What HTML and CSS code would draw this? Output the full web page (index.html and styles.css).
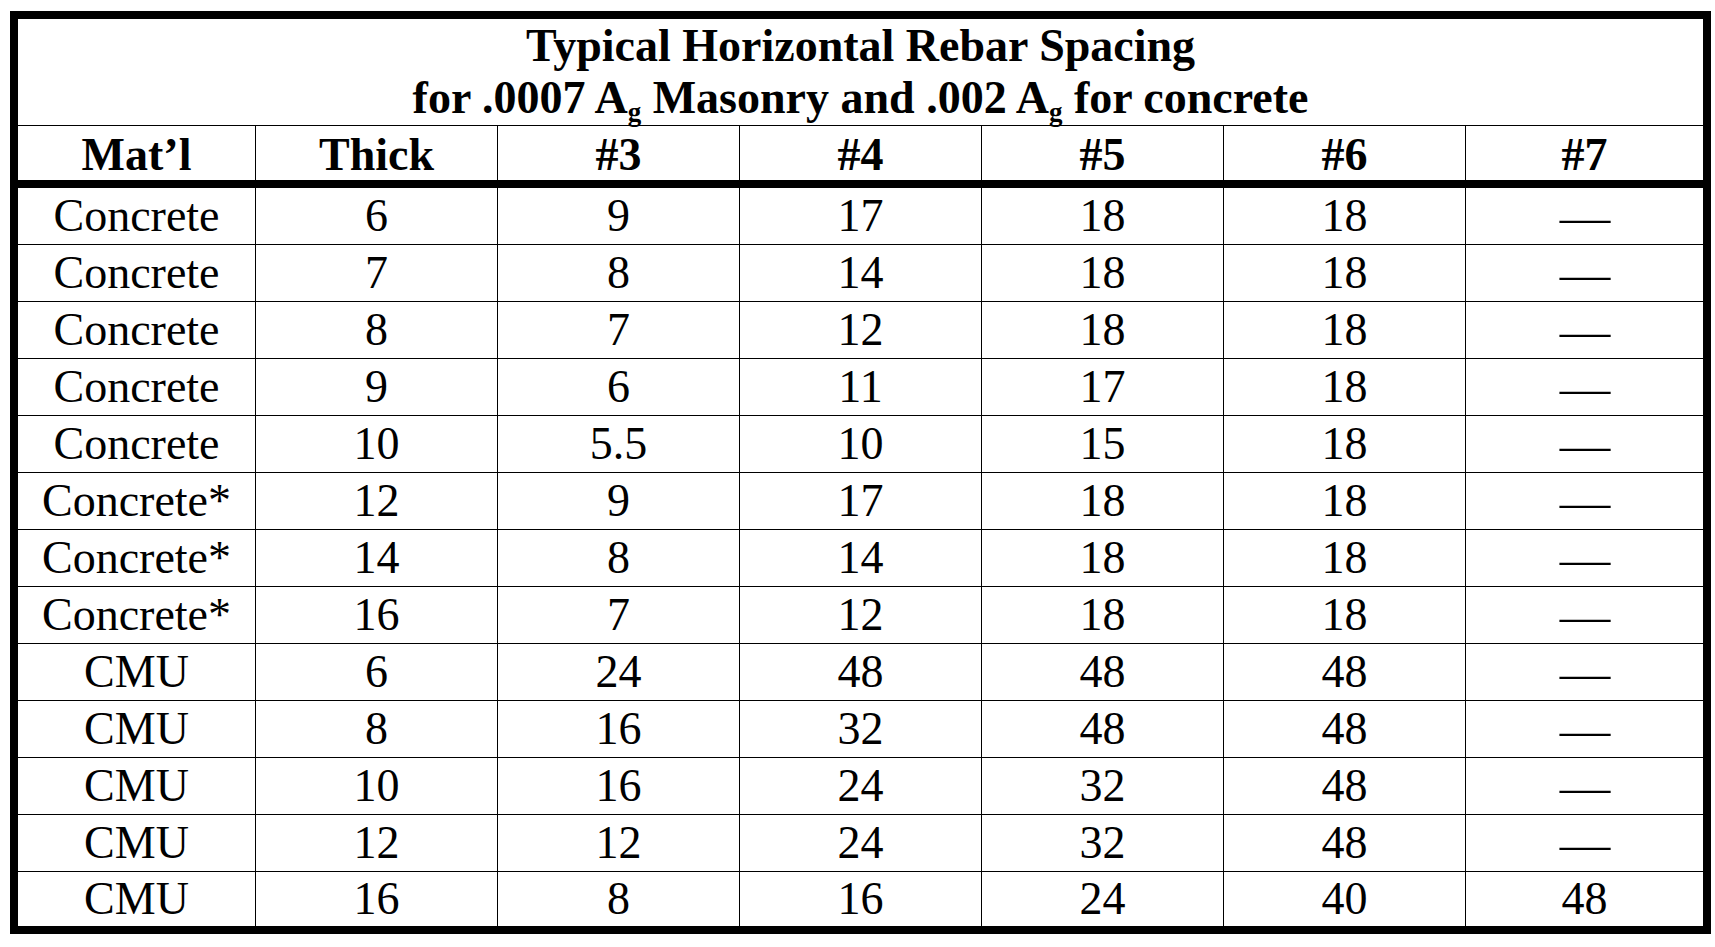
FILE: index.html
```html
<!DOCTYPE html>
<html lang="en">
<head>
<meta charset="utf-8">
<title>Typical Horizontal Rebar Spacing</title>
<link rel="stylesheet" href="styles.css">
</head>
<body>
<table class="rebar">
  <colgroup>
    <col class="c-first"><col class="c-mid"><col class="c-mid"><col class="c-mid"><col class="c-mid"><col class="c-mid"><col class="c-last">
  </colgroup>
  <thead>
    <tr class="title-row">
      <th colspan="7">Typical Horizontal Rebar Spacing<br>for .0007 A<sub>g</sub> Masonry and .002 A<sub>g</sub> for concrete</th>
    </tr>
    <tr class="head-row">
      <th>Mat’l</th><th>Thick</th><th>#3</th><th>#4</th><th>#5</th><th>#6</th><th>#7</th>
    </tr>
  </thead>
  <tbody>
    <tr><td>Concrete</td><td>6</td><td>9</td><td>17</td><td>18</td><td>18</td><td><span class="dash">—</span></td></tr>
    <tr><td>Concrete</td><td>7</td><td>8</td><td>14</td><td>18</td><td>18</td><td><span class="dash">—</span></td></tr>
    <tr><td>Concrete</td><td>8</td><td>7</td><td>12</td><td>18</td><td>18</td><td><span class="dash">—</span></td></tr>
    <tr><td>Concrete</td><td>9</td><td>6</td><td>11</td><td>17</td><td>18</td><td><span class="dash">—</span></td></tr>
    <tr><td>Concrete</td><td>10</td><td>5.5</td><td>10</td><td>15</td><td>18</td><td><span class="dash">—</span></td></tr>
    <tr><td>Concrete*</td><td>12</td><td>9</td><td>17</td><td>18</td><td>18</td><td><span class="dash">—</span></td></tr>
    <tr><td>Concrete*</td><td>14</td><td>8</td><td>14</td><td>18</td><td>18</td><td><span class="dash">—</span></td></tr>
    <tr><td>Concrete*</td><td>16</td><td>7</td><td>12</td><td>18</td><td>18</td><td><span class="dash">—</span></td></tr>
    <tr><td>CMU</td><td>6</td><td>24</td><td>48</td><td>48</td><td>48</td><td><span class="dash">—</span></td></tr>
    <tr><td>CMU</td><td>8</td><td>16</td><td>32</td><td>48</td><td>48</td><td><span class="dash">—</span></td></tr>
    <tr><td>CMU</td><td>10</td><td>16</td><td>24</td><td>32</td><td>48</td><td><span class="dash">—</span></td></tr>
    <tr><td>CMU</td><td>12</td><td>12</td><td>24</td><td>32</td><td>48</td><td><span class="dash">—</span></td></tr>
    <tr class="last-row"><td>CMU</td><td>16</td><td>8</td><td>16</td><td>24</td><td>40</td><td>48</td></tr>
  </tbody>
</table>
</body>
</html>
```

FILE: styles.css
```css
html, body {
  margin: 0;
  padding: 0;
  background: #ffffff;
}

body {
  padding: 11px 0 0 10px;
  font-family: "Liberation Serif", "Times New Roman", serif;
  color: #000000;
}

.rebar {
  width: 1701px;
  table-layout: fixed;
  border-collapse: separate;
  border-spacing: 0;
  border: 8px solid #000000;
  font-size: 46px;
}

.c-first { width: 238px; }
.c-mid { width: 242px; }
.c-last { width: 237px; }

.rebar th,
.rebar td {
  box-sizing: border-box;
  padding: 0;
  text-align: center;
  vertical-align: middle;
  border-right: 1px solid #000000;
  border-bottom: 1px solid #000000;
  white-space: nowrap;
}

.rebar th:last-child,
.rebar td:last-child {
  border-right: none;
}

.title-row th {
  height: 107px;
  font-weight: bold;
  line-height: 52px;
  padding-bottom: 1px;
  border-right: none;
}

.title-row sub {
  font-size: 27px;
  line-height: 0;
  vertical-align: -8px;
}

.head-row th {
  height: 62px;
  font-weight: bold;
  line-height: 50px;
  padding-top: 4px;
  border-bottom: 8px solid #000000;
}

.rebar td {
  height: 57px;
  font-weight: normal;
  line-height: 52px;
}

.last-row td {
  height: 54px;
  border-bottom: none;
}

.dash {
  display: inline-block;
  vertical-align: -4px;
  transform: scaleX(1.1);
}
```
